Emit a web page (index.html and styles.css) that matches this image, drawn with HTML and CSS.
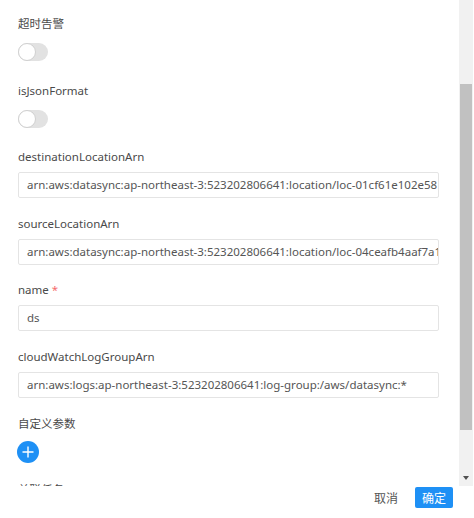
FILE: index.html
```html
<!DOCTYPE html>
<html lang="zh-CN">
<head>
  <meta charset="UTF-8">
  <meta name="viewport" content="width=device-width, initial-scale=1.0">
  <title>编辑任务</title>
  <link rel="stylesheet" href="styles.css">
</head>
<body>

  <div class="dialog-body">
    <div class="form-scroll">
      <div class="form-item">
        <div class="form-label">超时告警</div>
        <div class="form-control"><span class="switch"></span></div>
      </div>
      <div class="form-item">
        <div class="form-label">isJsonFormat</div>
        <div class="form-control"><span class="switch"></span></div>
      </div>
      <div class="form-item">
        <div class="form-label">destinationLocationArn</div>
        <div class="form-control"><div class="input">arn:aws:datasync:ap-northeast-3:523202806641:location/loc-01cf61e102e58</div></div>
      </div>
      <div class="form-item">
        <div class="form-label">sourceLocationArn</div>
        <div class="form-control"><div class="input">arn:aws:datasync:ap-northeast-3:523202806641:location/loc-04ceafb4aaf7a1</div></div>
      </div>
      <div class="form-item">
        <div class="form-label">name <span class="required">*</span></div>
        <div class="form-control"><div class="input">ds</div></div>
      </div>
      <div class="form-item">
        <div class="form-label">cloudWatchLogGroupArn</div>
        <div class="form-control"><div class="input">arn:aws:logs:ap-northeast-3:523202806641:log-group:/aws/datasync:*</div></div>
      </div>
      <div class="form-item">
        <div class="form-label">自定义参数</div>
        <div class="form-control">
          <button class="add-btn">
            <svg width="22" height="22" viewBox="0 0 22 22"><path d="M11 5.5v11M5.5 11h11" stroke="#fff" stroke-width="1.4" fill="none"/></svg>
          </button>
        </div>
      </div>
      <div class="form-item">
        <div class="form-label">关联任务</div>
      </div>
    </div>
    <!-- 滚动条 -->
    <div class="scrollbar">
      <div class="scroll-thumb"></div>
      <div class="scroll-arrow"></div>
    </div>
  </div>

  <div class="dialog-footer">
    <button class="btn btn-text">取消</button>
    <button class="btn btn-primary">确定</button>
  </div>

</body>
</html>
```

FILE: styles.css
```css
body {
  margin: 0;
  font-family: "Noto Sans", "Noto Sans CJK SC", sans-serif;
  font-size: 11.5px;
  color: #555;
  background-color: #fff;
}

.dialog-body {
  display: flex;
  height: 486px;
  overflow: hidden;
}

.form-scroll {
  flex: 1;
  padding: 13px 20px 0 18px;
  overflow: hidden;
}

.form-item {
  margin-bottom: 14.6px;
}

.form-label {
  height: 22px;
  line-height: 22px;
  color: #4a4a4a;
  margin-bottom: 4px;
}

.required {
  color: #f56c6c;
}

.form-control {
  height: 26px;
  display: flex;
  align-items: center;
}

.switch {
  position: relative;
  display: inline-block;
  width: 30px;
  height: 18px;
  border-radius: 9px;
  background-color: #e2e2e2;
}

.switch::after {
  content: "";
  position: absolute;
  left: 0;
  top: 0;
  width: 16px;
  height: 16px;
  border-radius: 50%;
  background: #fff;
  border: 1px solid #d0d0d0;
}

.input {
  width: 100%;
  height: 26px;
  line-height: 24px;
  box-sizing: border-box;
  padding: 0 8px;
  border: 1px solid #e4e4e4;
  border-radius: 2px;
  color: #555;
  white-space: nowrap;
  overflow: hidden;
}

.add-btn {
  width: 22px;
  height: 22px;
  margin-left: -1px;
  padding: 0;
  border: none;
  border-radius: 50%;
  background-color: #1e90f5;
  display: flex;
  align-items: center;
  justify-content: center;
}

.scrollbar {
  width: 14px;
  margin-right: 1px;
  background-color: #f1f1f1;
  display: flex;
  flex-direction: column;
  align-items: center;
}

.scroll-thumb {
  width: 12px;
  height: 346px;
  margin-top: 84px;
  background-color: #c1c1c1;
}

.scroll-arrow {
  margin-top: 46px;
  width: 0;
  height: 0;
  border-left: 3px solid transparent;
  border-right: 3px solid transparent;
  border-top: 4px solid #505050;
}

.dialog-footer {
  display: flex;
  justify-content: flex-end;
  align-items: center;
  gap: 9px;
  padding: 1px 21px 0 0;
}

.btn {
  font-family: "Noto Sans", "Noto Sans CJK SC", sans-serif;
  font-size: 12px;
  height: 21px;
  padding: 0 8px;
  border: none;
  border-radius: 2px;
  cursor: pointer;
}

.btn-text {
  background: none;
  color: #555;
}

.btn-primary {
  width: 38px;
  padding: 0;
  background-color: #1e90f5;
  color: #fff;
}
```
